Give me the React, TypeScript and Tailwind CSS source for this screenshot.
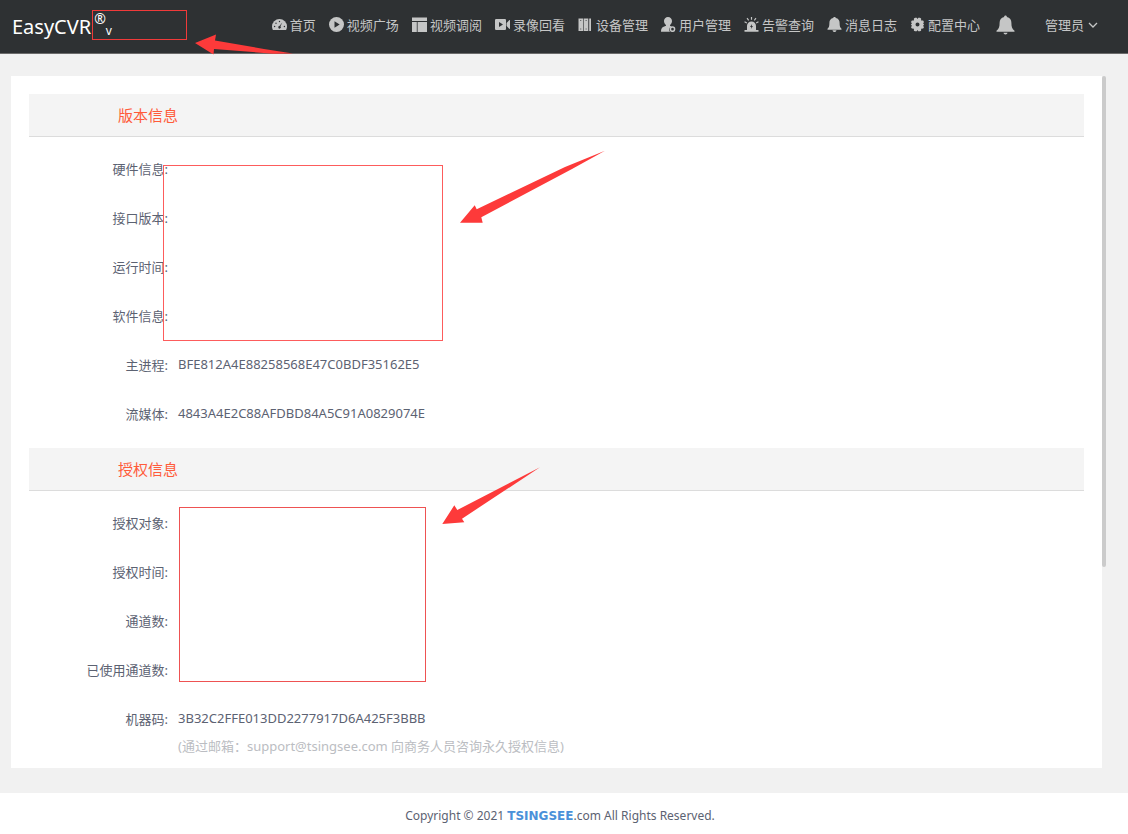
import type { ReactNode } from "react";

const NAV = [
  { label: "首页", icon: "gauge" },
  { label: "视频广场", icon: "play" },
  { label: "视频调阅", icon: "layout" },
  { label: "录像回看", icon: "video" },
  { label: "设备管理", icon: "device" },
  { label: "用户管理", icon: "user" },
  { label: "告警查询", icon: "alarm" },
  { label: "消息日志", icon: "bell" },
  { label: "配置中心", icon: "gear" },
];

const VERSION_ROWS = [
  { label: "硬件信息", value: "" },
  { label: "接口版本", value: "" },
  { label: "运行时间", value: "" },
  { label: "软件信息", value: "" },
  { label: "主进程", value: "BFE812A4E88258568E47C0BDF35162E5" },
  { label: "流媒体", value: "4843A4E2C88AFDBD84A5C91A0829074E" },
];

const LICENSE_ROWS = [
  { label: "授权对象", value: "" },
  { label: "授权时间", value: "" },
  { label: "通道数", value: "" },
  { label: "已使用通道数", value: "" },
  {
    label: "机器码",
    value: "3B32C2FFE013DD2277917D6A425F3BBB",
    note: "(通过邮箱：support@tsingsee.com 向商务人员咨询永久授权信息)",
  },
];

// "hole" is the header colour, used for the cut-outs inside the solid icons
const hole = "#2e3133";

const ICONS: Record<string, ReactNode> = {
  gauge: (
    <>
      <path d="M0 9.600a7.500 7.500 0 0 1 15 0c0 1.300-.3 2.500-.9 3.400H.9C.3 12.100 0 10.900 0 9.600z" />
      <g fill={hole}>
        <circle cx="2.600" cy="9.500" r=".7" />
        <circle cx="4" cy="6.200" r=".7" />
        <circle cx="7.500" cy="4.500" r=".7" />
        <circle cx="12.400" cy="9.500" r=".7" />
        <path d="M10.300 5.500L8.400 9.300a1.300 1.300 0 1 1-1-.3z" />
      </g>
    </>
  ),
  play: (
    <>
      <circle cx="7.500" cy="7.500" r="7.500" />
      <path d="M5.500 4.300l5.200 3.200-5.200 3.200z" fill={hole} />
    </>
  ),
  layout: <path d="M0 .5h15v3.500H0zM0 5h4.800v10H0zM5.600 5H15v10H5.600z" />,
  video: (
    <>
      <path d="M1.500 2h8.200c.8 0 1.300.5 1.300 1.300v8.400c0 .8-.5 1.300-1.300 1.300H1.500C.6 13 0 12.500 0 11.700V3.300C0 2.500.6 2 1.500 2zM11.600 6l2.600-2.800c.3-.3.8-.2.8.3v8c0 .5-.5.6-.8.3L11.600 9z" />
      <path d="M4 4.900l4 2.600-4 2.600z" fill={hole} />
    </>
  ),
  device: (
    <>
      <path d="M.5 1.500h4.700v12.500H.5zM5.800 1.500h4.500v12.500H5.800zM11.200 1.500h1.800v12.500h-1.800z" />
      <path d="M2 3.500h1.300M2 12h1.300M7.500 3.500h1.300M7.500 12h1.300" stroke={hole} strokeWidth=".6" />
    </>
  ),
  user: (
    <>
      <path d="M7 0c2.300 0 4 1.700 4 4 0 1.600-.8 3-2 3.900v.9l2 .8c-1.700.2-2.800 1.400-2.800 3 0 .8.300 1.600.8 2.200H0c0-2.400.5-4.100 2.600-5l2.400-1v-.9C3.800 7 3 5.600 3 4c0-2.300 1.700-4 4-4z" />
      <circle cx="11.500" cy="12.200" r="2.100" fill="none" stroke="currentColor" strokeWidth="1.500" />
    </>
  ),
  alarm: (
    <>
      <path d="M3 13V9a4.500 4.500 0 0 1 9 0v4h2.500v1.700H.5V13zM6.900 0h1.200v2.800H6.900zM2.600 1.500l.9-.7 1.600 2.200-.9.700zM12.400 1.500l-.9-.7-1.600 2.200.9.700zM.3 5.200l.5-1 2.300 1.300-.5 1zM14.700 5.200l-.5-1-2.300 1.300.5 1z" />
      <path d="M8.100 7L6 9.900h1.300l-.4 2L9 9H7.800z" fill={hole} />
    </>
  ),
  bell: (
    <path d="M7.500 0c.8 0 1.300.5 1.300 1.100 2.500.5 3.800 2.300 3.800 4.700 0 3.400.5 5 1.900 6v.9H.5v-.9c1.400-1 1.900-2.600 1.900-6 0-2.400 1.300-4.200 3.800-4.700C6.200.5 6.700 0 7.500 0zM5.500 13.200h4c-.2 1.100-1 1.800-2 1.800s-1.800-.7-2-1.800z" />
  ),
  gear: (
    <path
      fillRule="evenodd"
      d="M5.100.8h1.600l.8 1.300.8-1.300h1.600l1.200.6v2l2 .1.9 1.400-.9 1.500 1 1.100-1 1.200.9 1.500-.9 1.400-2 .1v2l-1.200.6H8.300l-.8-1.300-.8 1.300H5.100l-1.200-.6v-2l-2-.1L1 10.200l.9-1.500-1-1.200 1-1.100L1 4.900l.9-1.400 2-.1v-2zM7.500 5.500a2 2 0 1 0 0 4 2 2 0 0 0 0-4z"
    />
  ),
};

const Icon = ({ name }: { name: string }) => (
  <svg viewBox="0 0 15 15" className="h-[15px] w-[15px] shrink-0" fill="currentColor" aria-hidden="true">
    {ICONS[name]}
  </svg>
);

const Header = () => (
  <header className="relative flex h-[54px] items-center border-b border-[#6b6b6b] bg-[#2e3133] pr-[30px] pl-3 text-[#c5c6c6]">
    <div className="flex h-8 items-center text-white">
      <span className="text-xl">EasyCVR</span>
      <span className="ml-[3px] self-start text-sm leading-4">®</span>
      <span className="self-center pt-2 text-xs leading-4">v</span>
    </div>

    <nav className="mb-1 ml-auto flex items-center gap-[13px]">
      {NAV.map((item) => (
        <a key={item.label} href="#" className="flex items-center gap-[3px] whitespace-nowrap">
          <Icon name={item.icon} />
          {item.label}
        </a>
      ))}
    </nav>

    <button type="button" aria-label="消息" className="mb-1 ml-4">
      <svg viewBox="0 0 19 20" className="h-5 w-[19px]" fill="currentColor" aria-hidden="true">
        <path d="M9.500.500c.8 0 1.400.6 1.400 1.400 3 .7 4.500 2.900 4.500 5.900 0 4 .6 6.200 3.100 7.900v1H.5v-1c2.500-1.700 3.100-3.900 3.100-7.900 0-3 1.500-5.200 4.500-5.900 0-.8.6-1.400 1.400-1.400zM7.500 17.800h4c-.2 1-.9 1.700-2 1.700s-1.800-.7-2-1.700z" />
      </svg>
    </button>

    <button type="button" className="mb-1 ml-[30px] flex items-center gap-1 whitespace-nowrap">
      管理员
      <svg viewBox="0 0 10 10" className="h-2.5 w-2.5" fill="none" stroke="currentColor" strokeWidth="1.300" aria-hidden="true">
        <path d="M1 3l4 4 4-4" />
      </svg>
    </button>

    <div className="absolute top-[10px] left-[92px] h-[30px] w-[95px] border border-[#f03a3a]" />
    <svg viewBox="0 0 100 22" className="absolute top-[34px] left-[194px] h-[22px] w-[100px]" fill="#fd3a3a" aria-hidden="true">
      <path d="M1 9L22 .5l-1 6L70 15l29 4.500-20 .2L20 15l-.5 5.500z" />
    </svg>
  </header>
);

type Row = { label: string; value: string; note?: string };

const Section = ({ title, rows, children }: { title: string; rows: Row[]; children: ReactNode }) => (
  <section className="relative">
    <h2 className="flex h-[43px] items-center border-b border-[#dcdcdc] bg-[#f4f4f4] pl-[89px] text-[15px] text-[#ff5b3a]">
      {title}
    </h2>
    <dl className="pt-2">
      {rows.map((row) => (
        <div key={row.label} className="flex gap-[10px]">
          <dt className="w-[139px] shrink-0 text-right leading-[49px]">{row.label}:</dt>
          <dd>
            <div className="leading-[47px]">{row.value}</div>
            {row.note && <p className="-mt-1.5 leading-5 text-[#bbbdc2]">{row.note}</p>}
          </dd>
        </div>
      ))}
    </dl>
    {children}
  </section>
);

const Footer = () => (
  <footer className="bg-white pt-1 pr-2 text-center text-xs leading-[37px]">
    Copyright © 2021{" "}
    <a href="#" className="font-['DejaVu_Sans'] text-xs font-bold text-[#4a90d9]">
      TSINGSEE
    </a>
    .com All Rights Reserved.
  </footer>
);

export default function App() {
  return (
    <div className="flex min-h-screen flex-col bg-[#f1f1f1] font-['Noto_Sans','Noto_Sans_CJK_SC',sans-serif] text-[13px] leading-5 text-[#5c6272]">
      <Header />

      <main className="flex flex-1 pt-[22px] pr-[22px] pb-[25px] pl-[11px]">
        <div className="flex flex-1 flex-col gap-[9px] bg-white px-[18px] pt-[18px] pb-[7px]">
          <Section title="版本信息" rows={VERSION_ROWS}>
            <div className="absolute top-[71px] left-[134px] h-[176px] w-[280px] border border-[#fd5c5c]" />
            <svg viewBox="0 0 148 76" className="absolute top-[55px] left-[430px] h-[76px] w-[148px]" fill="#fd3a3a" aria-hidden="true">
              <path d="M1 73.700L15.700 56.300l2 4L106 18l40-16.300L113 20 22.300 68.300l1.400 5.400z" />
            </svg>
          </Section>

          <Section title="授权信息" rows={LICENSE_ROWS}>
            <div className="absolute top-[59px] left-[150px] h-[175px] w-[247px] border border-[#ee5252]" />
            <svg viewBox="0 0 100 60" className="absolute top-[18px] left-[412px] h-[60px] w-[100px]" fill="#fd3a3a" aria-hidden="true">
              <path d="M1.300 58l12-18.700 3 4.700L99 1.300 21 52.700l2.300 3.600z" />
            </svg>
          </Section>
        </div>

        {/* scroll track */}
        <div className="flex w-1 flex-col">
          <div className="flex-[71] rounded-full bg-[#cbcbcb]" />
          <div className="flex-[29]" />
        </div>
      </main>

      <Footer />
    </div>
  );
}
